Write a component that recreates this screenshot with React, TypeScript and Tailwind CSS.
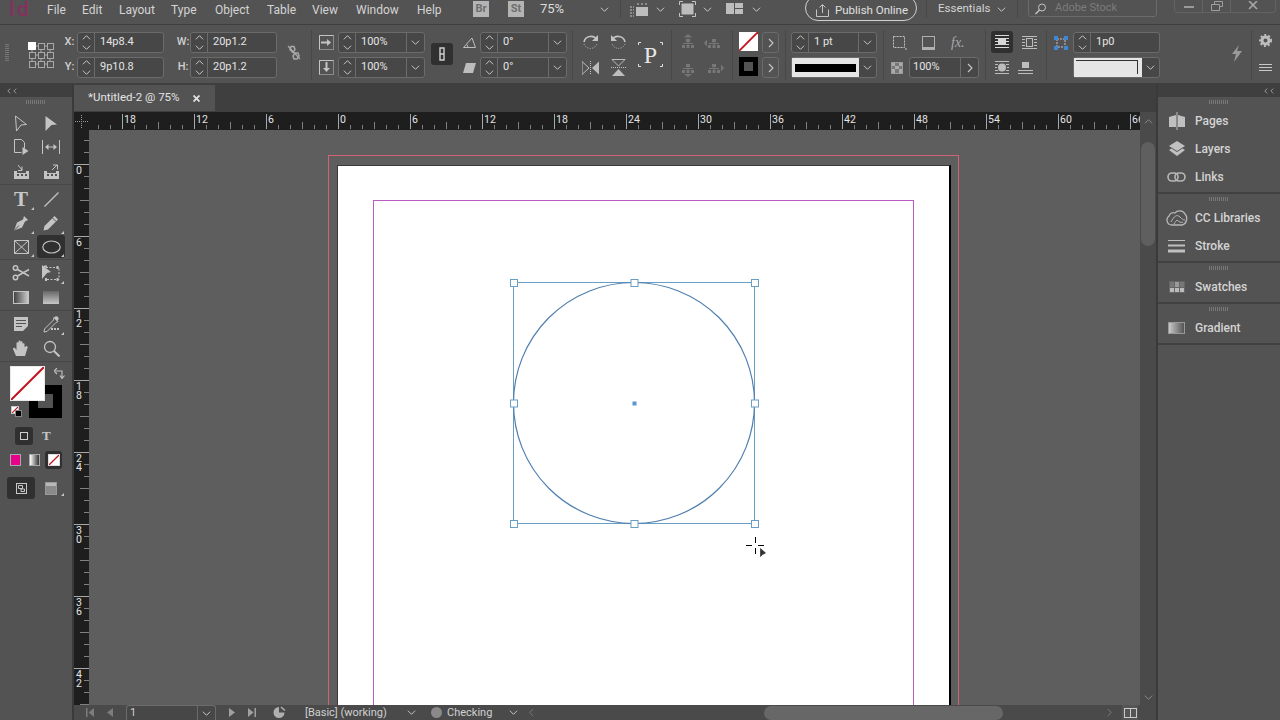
import type { ReactNode } from "react";

const ICON = "#c4c4c4";

function Chev({ dir = "down", size = 9, color = "#c8c8c8" }: { dir?: "down" | "up" | "left" | "right"; size?: number; color?: string }) {
	const d = { down: "M1 3l4 4 4-4", up: "M1 7l4-4 4 4", left: "M7 1L3 5l4 4", right: "M3 1l4 4-4 4" }[dir];
	return (
		<svg width={size} height={size} viewBox="0 0 10 10" fill="none" stroke={color} strokeWidth="1.1" className="shrink-0">
			<path d={d} />
		</svg>
	);
}

function Spin() {
	return (
		<div className="flex h-full w-[17px] shrink-0 flex-col items-center justify-center gap-[1px] border-r border-[#6b6b6b]">
			<Chev dir="up" />
			<Chev dir="down" />
		</div>
	);
}

function Field({ value, className, drop, next }: { value: string; className: string; drop?: boolean; next?: boolean }) {
	return (
		<div className={`flex h-[21px] items-center rounded-[3px] border border-[#6b6b6b] bg-[#474747] text-[11px] text-[#e4e4e4] ${className}`}>
			{next ? null : <Spin />}
			<span className={`flex-1 ${next ? "pl-[3px]" : "pl-[5px]"}`}>{value}</span>
			{drop ? (
				<div className="flex h-full w-[18px] items-center justify-center border-l border-[#6b6b6b]">
					<Chev />
				</div>
			) : null}
			{next ? (
				<div className="flex h-full w-[18px] items-center justify-center border-l border-[#6b6b6b]">
					<Chev dir="right" size={10} />
				</div>
			) : null}
		</div>
	);
}

function Divider({ className }: { className: string }) {
	return <div className={`mt-[-2px] h-[50px] w-px shrink-0 bg-[#484848] ${className}`} />;
}

function Col({ className, children }: { className: string; children: ReactNode }) {
	return <div className={`flex shrink-0 flex-col gap-[4px] ${className}`}>{children}</div>;
}

function Cell({ children, className = "" }: { children?: ReactNode; className?: string }) {
	return <div className={`flex h-[21px] items-center justify-center ${className}`}>{children}</div>;
}

function Svg({ w = 18, h = 18, children, vb }: { w?: number; h?: number; children: ReactNode; vb?: string }) {
	return (
		<svg width={w} height={h} viewBox={vb ?? `0 0 ${w} ${h}`} fill="none" stroke={ICON} className="shrink-0">
			{children}
		</svg>
	);
}

function NoneSwatch({ size, stroke = 2 }: { size: number; stroke?: number }) {
	return (
		<svg width={size} height={size} viewBox="0 0 20 20" className="block shrink-0">
			<rect width="20" height="20" fill="#fff" />
			<path d="M0 20L20 0" stroke="#c0151f" strokeWidth={stroke} />
		</svg>
	);
}

function Grip({ className = "" }: { className?: string }) {
	return <div className={`h-[4px] w-[20px] bg-[repeating-linear-gradient(90deg,#777_0,#777_1px,transparent_1px,transparent_2px)] ${className}`} />;
}

function OrgIcon({ arrow }: { arrow: "up" | "down" | "left" | "right" }) {
	return (
		<Svg w={20} h={20}>
			<g fill="#777" stroke="none">
				<rect x="8" y="6" width="4" height="3" />
				<rect x="4" y="12" width="3" height="3" />
				<rect x="8.5" y="12" width="3" height="3" />
				<rect x="13" y="12" width="3" height="3" />
				<rect x="5" y="10" width="10" height="1" />
				<rect x="9.5" y="9" width="1" height="3" />
				{arrow === "up" ? <path d="M10 1l4 3.5H6z" /> : null}
				{arrow === "down" ? <path d="M10 19l4-3H6z" /> : null}
				{arrow === "left" ? <path d="M0 10l3-3.5v7z" /> : null}
				{arrow === "right" ? <path d="M20 10l-3-3.5v7z" /> : null}
			</g>
		</Svg>
	);
}

function TitleBar() {
	return (
		<div className="flex h-[24px] shrink-0 items-start bg-[#535353] text-[12px] text-[#d4d4d4]">
			<span className="ml-[9px] -mt-[3px] w-[20px] text-[21px] font-medium leading-[24px] tracking-[2px] text-[#85305f]">Id</span>
			<div className="ml-[18px] mt-[1px] flex leading-[18px]">
				<span className="w-[35px]">File</span>
				<span className="w-[37px]">Edit</span>
				<span className="w-[52px]">Layout</span>
				<span className="w-[44px]">Type</span>
				<span className="w-[52px]">Object</span>
				<span className="w-[45px]">Table</span>
				<span className="w-[44px]">View</span>
				<span className="w-[61px]">Window</span>
				<span className="w-[56px]">Help</span>
			</div>
			<div className="mt-[1px] h-[16px] w-[16px] bg-[#b4b4b4] text-center text-[11px] font-bold leading-[16px] text-[#6e6e6e]">Br</div>
			<div className="ml-[19px] mt-[1px] h-[16px] w-[16px] bg-[#b4b4b4] text-center text-[11px] font-bold leading-[16px] text-[#6e6e6e]">St</div>
			<span className="ml-[16px] w-[60px] text-[13px] leading-[18px] text-[#dcdcdc]">75%</span>
			<div className="mt-[5px]"><Chev /></div>
			<div className="ml-[11px] h-[18px] w-px bg-[#484848]" />
			<div className="ml-[9px] mt-[1px]">
				<Svg w={19} h={16}>
					<rect x="6" y="6" width="12" height="9" fill="#bdbdbd" stroke="none" />
					<path d="M0 6h4M0 9h4M0 12h4M0 15h4M8 2v3M12 2v3M16 2v3" strokeDasharray="2 1" />
				</Svg>
			</div>
			<div className="ml-[7px] mt-[5px]"><Chev /></div>
			<div className="ml-[14px] mt-[1px]">
				<Svg w={17} h={16}>
					<rect x="2.5" y="2.5" width="12" height="11" fill="#bdbdbd" stroke="none" />
					<path d="M.5 4V.5H4M13 .5h3.500V4M.5 12v3.500H4M13 15.500h3.500V12" />
				</Svg>
			</div>
			<div className="ml-[7px] mt-[5px]"><Chev /></div>
			<div className="ml-[14px] mt-[3px]">
				<Svg w={17} h={11}>
					<g fill="#bdbdbd" stroke="none">
						<rect x="0" y="0" width="8" height="11" />
						<rect x="9" y="0" width="8" height="5" />
						<rect x="9" y="6" width="8" height="5" />
					</g>
				</Svg>
			</div>
			<div className="ml-[9px] mt-[5px]"><Chev /></div>
			<div className="ml-[44px] -mt-[5px] flex h-[26px] w-[112px] items-center gap-[6px] rounded-[13px] border border-[#d0d0d0] pl-[10px] pt-[5px] text-[11.5px] text-[#e0e0e0]">
				<Svg w={13} h={13}>
					<path d="M.5 5.5v7h12v-7M6.5 9V1M3.5 3.5l3-3 3 3" />
				</Svg>
				<span>Publish Online</span>
			</div>
			<div className="ml-[9px] h-[18px] w-px bg-[#484848]" />
			<span className="ml-[11px] w-[59px] text-[11.5px] leading-[16px] text-[#d4d4d4]">Essentials</span>
			<div className="mt-[5px]"><Chev /></div>
			<div className="ml-[11px] h-[18px] w-px bg-[#484848]" />
			<div className="ml-[10px] -mt-[3px] flex h-[20px] w-[129px] items-center gap-[6px] rounded-b-[3px] border border-[#6b6b6b] pl-[5px] pt-[3px] text-[11px] text-[#7c7c7c]">
				<Svg w={15} h={12}>
					<circle cx="8" cy="4.5" r="3.5" />
					<path d="M5.5 7L1.5 11" strokeWidth="1.5" />
				</Svg>
				<span>Adobe Stock</span>
			</div>
			<div className="ml-[17px] -mt-[2px] flex h-[15px] w-[102px] rounded-b-[3px] border border-[#636363]">
				<div className="flex w-[28px] items-center justify-center border-r border-[#636363]">
					<div className="mt-[3px] h-[2px] w-[10px] bg-[#9a9a9a]" />
				</div>
				<div className="flex w-[28px] items-center justify-center border-r border-[#636363]">
					<Svg w={12} h={10}>
						<path d="M3.5 3V.5h8v5H8.5M.5 3.5h8v6h-8z" stroke="#a0a0a0" />
					</Svg>
				</div>
				<div className="flex flex-1 items-center justify-center">
					<Svg w={10} h={9}>
						<path d="M1 0l8 8M9 0L1 8" stroke="#a8a8a8" strokeWidth="1.6" />
					</Svg>
				</div>
			</div>
		</div>
	);
}

function ControlBar() {
	return (
		<div className="flex h-[60px] shrink-0 border-y border-[#3f3f3f] bg-[#535353] pt-[7px] text-[11px] text-[#d0d0d0]">
			<div className="ml-[5px] mt-[12px] h-[17px] w-[4px] shrink-0 bg-[repeating-linear-gradient(0deg,#777_0,#777_1px,transparent_1px,transparent_2px)]" />
			{/* reference point */}
			<div className="ml-[19px] mt-[10px] w-[25px] shrink-0">
				<Svg w={26} h={26}>
					<g stroke="#a8a8a8">
						{[1, 10, 19].map((y) => [1, 10, 19].map((x) => <rect key={`${x}-${y}`} x={x + 0.5} y={y + 0.5} width="6" height="6" />))}
						<path d="M7 4h3M17 4h2M7 13h3M17 13h2M7 22h3M17 22h2M4 7v3M13 7v3M22 7v3M4 17v2M13 17v2M22 17v2" />
					</g>
					<rect x="0" y="0" width="8" height="8" fill="#fff" stroke="none" />
				</Svg>
			</div>
			<Col className="ml-[9px] w-[15px] font-medium">
				<Cell>X:</Cell>
				<Cell>Y:</Cell>
			</Col>
			<Col className="w-[88px]">
				<Field value="14p8.4" className="w-[87px]" />
				<Field value="9p10.8" className="w-[87px]" />
			</Col>
			<Col className="ml-[11px] w-[14px] font-medium">
				<Cell>W:</Cell>
				<Cell>H:</Cell>
			</Col>
			<Col className="w-[87px]">
				<Field value="20p1.2" className="w-[87px]" />
				<Field value="20p1.2" className="w-[87px]" />
			</Col>
			<div className="ml-[10px] mt-[13px] w-[14px] shrink-0">
				<Svg w={14} h={15}>
					<path d="M4 1.5h3l1 3-2 3-3-3zM8 8h3l1 3-2 3H7l-1-3z" strokeWidth="1.5" stroke="#a8a8a8" />
					<path d="M1 1l12 13" stroke="#a8a8a8" strokeWidth="1.2" />
				</Svg>
			</div>
			<Divider className="ml-[10px]" />
			<Col className="ml-[6px] w-[17px]">
				<Cell>
					<Svg w={15} h={15}>
						<rect x=".5" y=".5" width="14" height="14" strokeDasharray="1 1" />
						<path d="M.5.5h14M.5.5v14" />
						<path d="M2 7.5h7" strokeWidth="2" />
						<path d="M8 4l4 3.5L8 11z" fill={ICON} stroke="none" />
					</Svg>
				</Cell>
				<Cell>
					<Svg w={15} h={15}>
						<rect x=".5" y=".5" width="14" height="14" strokeDasharray="1 1" />
						<path d="M.5.5h14M.5.5v14" />
						<path d="M7.5 2v7" strokeWidth="2" />
						<path d="M4 8l3.5 4L11 8z" fill={ICON} stroke="none" />
					</Svg>
				</Cell>
			</Col>
			<Col className="ml-[3px] w-[87px]">
				<Field value="100%" className="w-[87px]" drop />
				<Field value="100%" className="w-[87px]" drop />
			</Col>
			<div className="ml-[6px] mt-[11px] flex h-[22px] w-[22px] shrink-0 items-center justify-center rounded-[3px] bg-[#303030]">
				<Svg w={8} h={14}>
					<path d="M2 1h4v6H2zM2 7h4v6H2z" strokeWidth="1.4" stroke="#d0d0d0" />
				</Svg>
			</div>
			<Col className="ml-[9px] w-[14px]">
				<Cell>
					<Svg w={13} h={11}>
						<path d="M.5 10.5h12L9 1z" stroke="#bdbdbd" />
						<path d="M5 10.5l-1-3" stroke="#bdbdbd" />
					</Svg>
				</Cell>
				<Cell>
					<Svg w={13} h={10}>
						<path d="M3 0h10l-3 10H0z" fill="#bdbdbd" stroke="none" />
					</Svg>
				</Cell>
			</Col>
			<Col className="ml-[4px] w-[87px]">
				<Field value="0°" className="w-[87px]" drop />
				<Field value="0°" className="w-[87px]" drop />
			</Col>
			<Divider className="ml-[5px]" />
			<Col className="ml-[8px] w-[18px]">
				<Cell>
					<Svg w={17} h={17}>
						<path d="M15 6A7 7 0 0 0 2 8" strokeWidth="1.6" />
						<path d="M2 10a7 7 0 0 0 13 0" strokeDasharray="1 1.5" />
						<path d="M16 1v6h-6z" fill={ICON} stroke="none" />
					</Svg>
				</Cell>
				<Cell>
					<Svg w={17} h={14}>
						<path d="M0 .5l7 6.5L0 13.5z" stroke="#bdbdbd" />
						<path d="M8.5 0v14" strokeDasharray="1 1" />
						<path d="M17 .5L10 7l7 6.5z" fill="#bdbdbd" stroke="none" />
					</Svg>
				</Cell>
			</Col>
			<Col className="ml-[10px] w-[18px]">
				<Cell>
					<Svg w={17} h={17}>
						<path d="M2 6a7 7 0 0 1 13 2" strokeWidth="1.6" />
						<path d="M15 10a7 7 0 0 1-13 0" strokeDasharray="1 1.5" />
						<path d="M1 1v6h6z" fill={ICON} stroke="none" />
					</Svg>
				</Cell>
				<Cell>
					<Svg w={15} h={17}>
						<path d="M1 .5h13L7.5 7z" stroke="#bdbdbd" />
						<path d="M0 8.5h15" strokeDasharray="1 1" />
						<path d="M1 17h13l-6.5-7z" fill="#bdbdbd" stroke="none" />
					</Svg>
				</Cell>
			</Col>
			<div className="relative ml-[11px] mt-[10px] flex h-[25px] w-[25px] shrink-0 items-center justify-center font-['Liberation_Serif',serif] text-[24px] leading-none text-[#e6e6e6]">
				P
				<svg width="25" height="25" viewBox="0 0 25 25" fill="none" stroke="#e0e0e0" className="absolute left-0 top-0">
					<path d="M.5 3V.5H3M22 .5h2.500V3M.5 22v2.500H3M22 24.500h2.500V22" />
				</svg>
			</div>
			<Divider className="ml-[8px]" />
			<Col className="ml-[6px] w-[20px]">
				<Cell><OrgIcon arrow="up" /></Cell>
				<Cell><OrgIcon arrow="down" /></Cell>
			</Col>
			<Col className="ml-[6px] w-[20px]">
				<Cell><OrgIcon arrow="left" /></Cell>
				<Cell><OrgIcon arrow="right" /></Cell>
			</Col>
			<Divider className="ml-[8px]" />
			<Col className="ml-[6px] w-[19px]">
				<NoneSwatch size={19} />
				<div className="mt-[2px] flex h-[19px] w-[19px] items-center justify-center bg-black">
					<div className="h-[9px] w-[9px] bg-[#535353]" />
				</div>
			</Col>
			<Col className="ml-[4px] w-[17px]">
				<div className="flex h-[21px] items-center justify-center rounded-[3px] border border-[#6b6b6b]"><Chev dir="right" size={10} /></div>
				<div className="flex h-[21px] items-center justify-center rounded-[3px] border border-[#6b6b6b]"><Chev dir="right" size={10} /></div>
			</Col>
			<Divider className="ml-[6px]" />
			<Col className="ml-[5px] w-[86px]">
				<Field value="1 pt" className="w-[86px]" drop />
				<div className="flex h-[21px] w-[86px] rounded-[3px] border border-[#6b6b6b] bg-[#474747]">
					<div className="flex w-[67px] items-center justify-center bg-[#e6e6e6]">
						<div className="h-[8px] w-[61px] bg-black" />
					</div>
					<div className="flex flex-1 items-center justify-center"><Chev /></div>
				</div>
			</Col>
			<Divider className="ml-[6px]" />
			<Col className="ml-[7px] w-[88px]">
				<div className="flex h-[21px] items-center pl-[2px]">
					<Svg w={14} h={14}>
						<rect x=".5" y=".5" width="11" height="11" strokeDasharray="2 1" />
						<path d="M12 13h2" />
					</Svg>
					<div className="ml-[15px] h-[14px] w-[13px] border border-b-[3px] border-[#b0b0b0]" />
					<span className="ml-[16px] font-['Liberation_Serif',serif] text-[14px] italic text-[#a8a8a8]">fx.</span>
				</div>
				<div className="flex h-[21px] items-center">
					<div className="grid h-[12px] w-[12px] grid-cols-3 border border-[#9a9a9a] bg-[#777]">
						<div className="bg-[#aaa]" /><div /><div className="bg-[#aaa]" />
						<div /><div className="bg-[#aaa]" /><div />
						<div className="bg-[#aaa]" /><div /><div className="bg-[#aaa]" />
					</div>
					<Field value="100%" className="ml-[6px] w-[70px]" next />
				</div>
			</Col>
			<Divider className="ml-[6px]" />
			<Col className="ml-[5px] w-[46px]">
				<div className="flex h-[21px] items-center">
					<div className="-mt-[2px] flex h-[22px] w-[22px] items-center justify-center rounded-[3px] bg-[#303030]">
						<Svg w={14} h={13}>
							<path d="M0 .5h14M0 3.500h14M0 6.500h14M0 9.500h14M0 12.500h14" stroke="#d8d8d8" />
							<rect x="3" y="3" width="8" height="7" fill="#d8d8d8" stroke="none" />
						</Svg>
					</div>
					<div className="ml-[9px]">
						<Svg w={15} h={13}>
							<path d="M0 .5h15M0 12.500h15M0 3.500h3M0 6.500h3M0 9.500h3M12 3.500h3M12 6.500h3M12 9.500h3" stroke="#bdbdbd" />
							<rect x="4.5" y="2.5" width="6" height="8" stroke="#bdbdbd" />
						</Svg>
					</div>
				</div>
				<div className="flex h-[21px] items-center pl-[4px]">
					<Svg w={14} h={13}>
						<path d="M0 .5h14M0 12.500h14M0 3.500h3M0 6.500h2M0 9.500h3M11 3.500h3M12 6.500h2M11 9.500h3" stroke="#bdbdbd" />
						<circle cx="7" cy="6.500" r="4" fill="#bdbdbd" stroke="none" />
					</Svg>
					<div className="ml-[9px]">
						<Svg w={15} h={13}>
							<path d="M0 12.500h15M0 9.500h15" stroke="#bdbdbd" />
							<rect x="4" y="1" width="7" height="6" fill="#bdbdbd" stroke="none" />
						</Svg>
					</div>
				</div>
			</Col>
			<Divider className="ml-[9px]" />
			<Col className="ml-[7px] w-[106px]">
				<div className="flex h-[21px] items-center">
					<Svg w={14} h={14}>
						<path d="M3 3h8v8H3z" strokeDasharray="2 1" />
						<g fill="#3f86d6" stroke="none">
							<rect x="0" y="0" width="4" height="4" />
							<rect x="10" y="0" width="4" height="4" />
							<rect x="0" y="10" width="4" height="4" />
							<rect x="10" y="10" width="4" height="4" />
						</g>
					</Svg>
					<Field value="1p0" className="ml-[5px] w-[87px]" />
				</div>
				<div className="ml-[19px] flex h-[21px] w-[87px] rounded-[3px] border border-[#6b6b6b] bg-[#474747]">
					<div className="w-[68px] bg-[#e6e6e6] pl-[2px] pr-[4px] pt-[2px]">
						<div className="h-[14px] border-r border-t border-[#333]" />
					</div>
					<div className="flex flex-1 items-center justify-center"><Chev /></div>
				</div>
			</Col>
			<div className="ml-[71px] mt-[13px] w-[11px] shrink-0">
				<Svg w={11} h={17}>
					<path d="M8 0L1 9h4l-2 8 8-11H6z" fill="#9a9a9a" stroke="none" />
				</Svg>
			</div>
			<Divider className="ml-[9px]" />
			<Col className="ml-[6px] w-[14px]">
				<Cell className="pb-[4px]">
					<Svg w={13} h={13}>
						<circle cx="6.5" cy="6.5" r="3.500" strokeWidth="3" stroke="#bdbdbd" />
						<circle cx="6.5" cy="6.5" r="5.500" strokeDasharray="2 2" strokeWidth="2" stroke="#bdbdbd" />
					</Svg>
				</Cell>
				<Cell>
					<Svg w={13} h={7}>
						<path d="M0 .5h13M0 3.500h13M0 6.500h13" stroke="#c8c8c8" />
					</Svg>
				</Cell>
			</Col>
		</div>
	);
}

function Tool({ children, corner, active }: { children: ReactNode; corner?: boolean; active?: boolean }) {
	return (
		<div className={`relative flex h-full w-[28px] items-center justify-center rounded-[3px] ${active ? "bg-[#303030]" : ""}`}>
			{children}
			{corner ? <span className="absolute bottom-[1px] right-[1px] h-0 w-0 border-b-[3px] border-l-[3px] border-b-[#c8c8c8] border-l-transparent" /> : null}
		</div>
	);
}

function ToolRow({ children, className }: { children: ReactNode; className: string }) {
	return <div className={`flex justify-between px-[7px] ${className}`}>{children}</div>;
}

function ToolPanel() {
	return (
		<div className="flex w-[74px] shrink-0 flex-col border-r-2 border-[#3a3a3a] bg-[#535353]">
			<div className="flex h-[13px] shrink-0 items-center bg-[#3f3f3f] pl-[6px]">
				<Chev dir="left" size={6} /><Chev dir="left" size={6} />
			</div>
			<Grip className="ml-[26px] mt-[3px] shrink-0" />
			<ToolRow className="mt-[7px] h-[24px]">
				<Tool>
					<Svg w={14} h={17}><path d="M1.5 1l11 8.500-5.500.5-4.500 6z" /></Svg>
				</Tool>
				<Tool>
					<Svg w={14} h={17}><path d="M1.500 1l11.500 8.500-5.500.5-6 6z" fill={ICON} stroke="none" /></Svg>
				</Tool>
			</ToolRow>
			<ToolRow className="h-[23px]">
				<Tool>
					<Svg w={16} h={16}>
						<path d="M1.500.5h7l3 3v6M1.500.5v13h7" />
						<path d="M9.500 8l6 4-6 4z" fill={ICON} stroke="none" />
					</Svg>
				</Tool>
				<Tool>
					<Svg w={18} h={14}>
						<path d="M.5 0v14M17.500 0v14M4 7h10" />
						<path d="M3 7l3.500-3v6zM15 7l-3.500-3v6z" fill={ICON} stroke="none" />
					</Svg>
				</Tool>
			</ToolRow>
			<ToolRow className="h-[26px]">
				<Tool>
					<Svg w={15} h={15}>
						<path d="M0 7h3v2h9V7h3v8H0z" fill={ICON} stroke="none" />
						<path d="M4 1l4 5M8 2.500v4H4" />
						<path d="M3 11h2M7 11h2M11 11h2" stroke="#535353" strokeWidth="2" />
					</Svg>
				</Tool>
				<Tool>
					<Svg w={15} h={15}>
						<path d="M0 7h3v2h9V7h3v8H0z" fill={ICON} stroke="none" />
						<path d="M8 6l5-5M9 1h4.500v4.500" />
						<path d="M3 11h2M7 11h2M11 11h2" stroke="#535353" strokeWidth="2" />
					</Svg>
				</Tool>
			</ToolRow>
			<div className="h-px shrink-0 bg-[#484848]" />
			<ToolRow className="mt-[2px] h-[24px]">
				<Tool corner>
					<span className="font-['Liberation_Serif',serif] text-[21px] font-bold leading-none text-[#c8c8c8]">T</span>
				</Tool>
				<Tool>
					<Svg w={15} h={15}><path d="M.5 14.500l14-14" strokeWidth="1.300" /></Svg>
				</Tool>
			</ToolRow>
			<ToolRow className="h-[24px]">
				<Tool corner>
					<Svg w={16} h={16}>
						<path d="M11 1l4 4-3 1.500-3 6L1 15.500l3-8 6-3z" fill={ICON} stroke="none" />
						<path d="M1 15.500l5-5" stroke="#535353" />
					</Svg>
				</Tool>
				<Tool corner>
					<Svg w={16} h={16}>
						<path d="M11.500 1L15 4.500 5 14.500l-4.500 1 1-4.500z" fill={ICON} stroke="none" />
						<path d="M9.500 3L13 6.500" stroke="#535353" />
					</Svg>
				</Tool>
			</ToolRow>
			<ToolRow className="h-[23px]">
				<Tool corner>
					<Svg w={15} h={14}><path d="M.5.5h14v13H.5zM.5.5l14 13M14.500.5l-14 13" /></Svg>
				</Tool>
				<Tool corner active>
					<Svg w={19} h={14}><ellipse cx="9.5" cy="7" rx="8.700" ry="6" strokeWidth="1.200" /></Svg>
				</Tool>
			</ToolRow>
			<div className="mt-[1px] h-px shrink-0 bg-[#484848]" />
			<ToolRow className="mt-[1px] h-[24px]">
				<Tool>
					<Svg w={18} h={16}>
						<circle cx="3.500" cy="3" r="2.200" strokeWidth="1.500" />
						<circle cx="3.500" cy="12.500" r="2.200" strokeWidth="1.500" />
						<path d="M5.500 4.500L17 11M5.500 11L17 4.500" strokeWidth="1.500" />
					</Svg>
				</Tool>
				<Tool corner>
					<Svg w={20} h={18}>
						<path d="M5 3.500h13v12H6" strokeDasharray="2 1.500" />
						<path d="M1 1l9 7-4 1-5 6z" fill={ICON} stroke="none" />
						<path d="M3 2.500h3M16.500 2v3M16.500 14v3M5 14v3" strokeWidth="2" />
					</Svg>
				</Tool>
			</ToolRow>
			<ToolRow className="h-[24px]">
				<Tool>
					<div className="h-[13px] w-[16px] border border-[#c4c4c4] bg-[linear-gradient(90deg,#444,#c8c8c8)]" />
				</Tool>
				<Tool>
					<div className="h-[13px] w-[16px] bg-[linear-gradient(180deg,#666,#c8c8c8)]" />
				</Tool>
			</ToolRow>
			<div className="mt-[1px] h-px shrink-0 bg-[#484848]" />
			<ToolRow className="mt-[1px] h-[24px]">
				<Tool>
					<Svg w={14} h={14}>
						<path d="M0 0h14v9l-5 5H0z" fill={ICON} stroke="none" />
						<path d="M2 3.500h10M2 6.500h10M2 9.500h6" stroke="#535353" />
					</Svg>
				</Tool>
				<Tool corner>
					<Svg w={17} h={17}>
						<path d="M11 1.500l4 4-2 1-9 9-3 .5.500-3 9-9z" />
						<path d="M11 2c1-2 3-2 4-1s1 3-1 4z" fill={ICON} stroke="none" />
						<path d="M8 13h8" strokeWidth="2" strokeDasharray="2 1" />
					</Svg>
				</Tool>
			</ToolRow>
			<ToolRow className="h-[24px]">
				<Tool>
					<Svg w={16} h={17}>
						<path d="M3 16L0 9c0-1 1-1.500 2-1l1.500 2V3c0-1 2-1 2 0V1.500c0-1.500 2-1.500 2 0V2c0-1 2-1 2 0v2c0-1 2-1 2 0v3l2-1c1 0 1.500 1 1 2L12 16z" fill={ICON} stroke="none" />
					</Svg>
				</Tool>
				<Tool>
					<Svg w={17} h={17}>
						<circle cx="7" cy="7" r="5.500" strokeWidth="1.300" />
						<path d="M11 11l5.500 5.500" strokeWidth="2" />
					</Svg>
				</Tool>
			</ToolRow>
			<div className="mt-[1px] h-px shrink-0 bg-[#484848]" />
			{/* fill and stroke */}
			<div className="relative h-[64px] shrink-0">
				<div className="absolute left-[29px] top-[23px] h-[33px] w-[33px] bg-black">
					<div className="ml-[9px] mt-[9px] h-[14px] w-[15px] bg-[#535353]" />
				</div>
				<div className="absolute left-[10px] top-[4px] border border-[#e8e8e8]">
					<NoneSwatch size={33} stroke={1.2} />
				</div>
				<div className="absolute left-[54px] top-[6px]">
					<Svg w={11} h={11}>
						<path d="M1.500 3h6.500v7M0 3l3-3M0 3l3 3M6 7.500l2 3 2.500-3" strokeWidth="1.100" />
					</Svg>
				</div>
				<div className="absolute left-[11px] top-[44px] border border-[#c8c8c8]">
					<NoneSwatch size={6} stroke={4} />
				</div>
				<div className="absolute left-[15px] top-[48px] h-[7px] w-[7px] border border-[#888] bg-black" />
			</div>
			<div className="mt-[1px] flex h-[18px] shrink-0 items-center px-[15px]">
				<div className="flex h-[18px] w-[18px] items-center justify-center rounded-[3px] bg-[#303030]">
					<div className="h-[8px] w-[8px] border border-[#d0d0d0]" />
				</div>
				<span className="ml-[9px] font-['Liberation_Serif',serif] text-[13px] font-bold text-[#c8c8c8]">T</span>
			</div>
			<div className="mt-[5px] flex h-[20px] shrink-0 items-center px-[10px]">
				<div className="h-[12px] w-[12px] border border-[#a8a8a8] bg-[#e6008c]" />
				<div className="ml-[8px] h-[12px] w-[12px] border border-[#a8a8a8] bg-[linear-gradient(90deg,#fff,#333)]" />
				<div className="ml-[5px] flex h-[18px] w-[18px] items-center justify-center rounded-[3px] bg-[#303030]">
					<div className="border border-[#ddd]"><NoneSwatch size={10} stroke={2.5} /></div>
				</div>
			</div>
			<div className="mt-[7px] flex h-[22px] shrink-0 items-center pl-[7px]">
				<div className="flex h-[22px] w-[28px] items-center justify-center rounded-[3px] bg-[#303030]">
					<Svg w={11} h={11}>
						<rect x=".5" y=".5" width="10" height="10" stroke="#c8c8c8" />
						<path d="M2.500 2.500h4v3h-4zM5 6h3.500v2.500H5z" stroke="#c8c8c8" />
					</Svg>
				</div>
				<div className="ml-[10px] h-[13px] w-[12px] border border-[#999] bg-[#8a8a8a]">
					<div className="h-[3px] bg-[#b8b8b8]" />
				</div>
				<span className="ml-[4px] mt-[12px] h-0 w-0 border-b-[3px] border-l-[3px] border-b-[#c8c8c8] border-l-transparent" />
			</div>
		</div>
	);
}

const H_LABELS = [
	{ t: "18", x: 50 }, { t: "12", x: 122 }, { t: "6", x: 194 }, { t: "0", x: 266 }, { t: "6", x: 338 }, { t: "12", x: 410 },
	{ t: "18", x: 482 }, { t: "24", x: 554 }, { t: "30", x: 626 }, { t: "36", x: 698 }, { t: "42", x: 770 }, { t: "48", x: 842 },
	{ t: "54", x: 914 }, { t: "60", x: 986 }, { t: "66", x: 1058 },
];

function HRuler() {
	return (
		<svg width="1066" height="18" viewBox="0 0 1066 18" className="block shrink-0">
			<rect width="1066" height="18" fill="#1e1e1e" />
			<g fill="none" strokeWidth="1">
				{Array.from({ length: 89 }, (_, i) => 12 * i + 0.5).map((x) => {
					const major = (x - 48.5) % 72 === 0;
					const mid = (x - 12.5) % 72 === 0;
					return <path key={x} d={`M${x} ${major ? 2 : mid ? 10 : 13}V17`} stroke={major ? "#a8a8a8" : "#808080"} />;
				})}
			</g>
			{H_LABELS.map((l) => (
				<text key={l.x} x={l.x} y="11" fill="#e4e4e4" fontSize="10.5" fontFamily="Roboto, sans-serif">{l.t}</text>
			))}
			<rect x="0" y="0" width="15" height="18" fill="#1e1e1e" />
			<path d="M1 9.500h13M7.500 3v13" stroke="#999" strokeDasharray="1 1" fill="none" />
		</svg>
	);
}

const V_LABELS = [
	{ t: ["0"], y: 34 }, { t: ["6"], y: 106 }, { t: ["1", "2"], y: 178 }, { t: ["1", "8"], y: 250 },
	{ t: ["2", "4"], y: 322 }, { t: ["3", "0"], y: 394 }, { t: ["3", "6"], y: 466 }, { t: ["4", "2"], y: 538 },
];

function VRuler() {
	return (
		<svg width="15" height="575" viewBox="0 0 15 575" className="block shrink-0">
			<rect width="15" height="575" fill="#1e1e1e" />
			{Array.from({ length: 48 }, (_, i) => 10.5 + 12 * i).map((y) => {
				const major = (y - 34.5 + 72) % 72 === 0;
				const mid = (y - 70.5 + 72) % 72 === 0;
				return <path key={y} d={`M${major ? 0 : mid ? 6 : 10} ${y}H15`} stroke={major ? "#a8a8a8" : "#808080"} />;
			})}
			{V_LABELS.map((l) =>
				l.t.map((c, i) => (
					<text key={`${l.y}-${i}`} x="2" y={l.y + 9.5 + i * 9.5} fill="#e4e4e4" fontSize="10.5" fontFamily="Roboto, sans-serif">{c}</text>
				)),
			)}
		</svg>
	);
}

function Selection() {
	const handles = [[424.5, 152.5], [545, 152.5], [665.5, 152.5], [424.5, 273], [665.5, 273], [424.5, 393.5], [545, 393.5], [665.5, 393.5]];
	return (
		<svg width="800" height="450" viewBox="0 0 800 450" fill="none" className="absolute left-0 top-0">
			<rect x="424.5" y="152.5" width="241" height="241" stroke="#6a9fc4" />
			<circle cx="545" cy="273" r="120.5" stroke="#4f7fb0" strokeWidth="1.2" />
			{handles.map(([x, y]) => (
				<rect key={`${x}-${y}`} x={x - 3} y={y - 3} width="7" height="7" fill="#fff" stroke="#6a9fc4" />
			))}
			<rect x="543.5" y="271.5" width="4" height="4" fill="#5b95d8" />
			{/* draw cursor */}
			<g stroke="#000">
				<path d="M657 415.500h6M669 415.500h6M666.500 407v6M666.500 418v6" />
				<path d="M671.500 418.500v8l2-2 3-1.500z" fill="#333" stroke="#222" strokeWidth=".6" />
			</g>
		</svg>
	);
}

function Canvas() {
	return (
		<div className="relative h-[575px] w-[1051px] overflow-hidden bg-[#5e5e5e]">
			<div className="ml-[239px] mt-[25px] h-[700px] w-[631px] border border-[#cf6476]">
				<div className="ml-[8px] mt-[9px] h-[700px] w-[614px] border-l border-r-2 border-t border-r-black border-l-[#3a3a3a] border-t-[#3a3a3a] bg-white">
					<div className="ml-[35px] mt-[34px] h-[700px] w-[541px] border border-[#b95cc2]" />
				</div>
			</div>
			<Selection />
		</div>
	);
}

function StatusBar() {
	return (
		<div className="flex h-[15px] shrink-0 items-center bg-[#4a4a4a] text-[11px] text-[#d0d0d0]">
			<div className="ml-[12px] w-[8px]">
				<Svg w={8} h={9}><path d="M0 0h1.500v9H0zM8 0v9L2.500 4.500z" fill="#7c7c7c" stroke="none" /></Svg>
			</div>
			<div className="ml-[13px] w-[6px]">
				<Svg w={6} h={9}><path d="M6 0v9L0 4.500z" fill="#7c7c7c" stroke="none" /></Svg>
			</div>
			<div className="ml-[13px] flex h-[15px] w-[90px] items-center rounded-t-[3px] border border-b-0 border-[#6b6b6b] bg-[#474747] pl-[3px]">
				<span className="flex-1">1</span>
				<div className="flex h-full w-[18px] items-center justify-center border-l border-[#6b6b6b]"><Chev /></div>
			</div>
			<div className="ml-[13px] w-[6px]">
				<Svg w={6} h={9}><path d="M0 0v9l6-4.500z" fill="#a0a0a0" stroke="none" /></Svg>
			</div>
			<div className="ml-[13px] w-[8px]">
				<Svg w={8} h={9}><path d="M0 0v9l5.500-4.500zM6.500 0H8v9H6.500z" fill="#a0a0a0" stroke="none" /></Svg>
			</div>
			<div className="ml-[17px] w-[14px]">
				<Svg w={14} h={13}>
					<path d="M6 1a5.500 5.500 0 1 0 5.500 5.500H6z" fill="#b0b0b0" stroke="none" />
					<path d="M8 1l4 3.500" stroke="#b0b0b0" strokeWidth="1.500" />
				</Svg>
			</div>
			<span className="ml-[18px] w-[102px] pt-px">[Basic] (working)</span>
			<Chev />
			<div className="ml-[15px] h-[11px] w-[11px] rounded-full bg-[#8a8a8a]" />
			<span className="ml-[5px] w-[62px] pt-px">Checking</span>
			<Chev />
			<div className="ml-[9px]"><Chev dir="left" color="#787878" /></div>
			<div className="ml-[228px] h-[14px] w-[239px] rounded-full bg-[#676767]" />
			<div className="ml-[102px]"><Chev dir="right" color="#787878" /></div>
			<div className="ml-[8px] flex h-[15px] w-[16px] items-center justify-center bg-[#555]">
				<div className="h-[10px] w-[13px] border border-[#c8c8c8] bg-[linear-gradient(90deg,transparent_45%,#c8c8c8_45%,#c8c8c8_55%,transparent_55%)]" />
			</div>
		</div>
	);
}

function Scrollbar() {
	return (
		<div className="flex w-[16px] shrink-0 flex-col items-center bg-[#4a4a4a]">
			<div className="mt-[5px]"><Chev dir="up" color="#8a8a8a" /></div>
			<div className="mt-[16px] h-[104px] w-[14px] rounded-full bg-[#5f5f5f]" />
			<div className="mb-[3px] mt-auto"><Chev color="#8a8a8a" /></div>
		</div>
	);
}

function PanelItem({ icon, label, className }: { icon: ReactNode; label: string; className: string }) {
	return (
		<div className={`flex items-center ${className}`}>
			<div className="flex w-[37px] justify-center">{icon}</div>
			<span className="text-[12px] font-medium text-[#d4d4d4]">{label}</span>
		</div>
	);
}

function PanelGroup({ children, className }: { children: ReactNode; className: string }) {
	return (
		<div className={`flex flex-col border-b-2 border-[#414141] ${className}`}>
			<Grip className="mx-auto mt-[3px] shrink-0" />
			{children}
		</div>
	);
}

function RightPanel() {
	return (
		<div className="flex w-[124px] shrink-0 flex-col border-l-2 border-[#3a3a3a] bg-[#535353]">
			<div className="flex h-[13px] shrink-0 items-center justify-end bg-[#3f3f3f] pr-[5px]">
				<Chev dir="left" size={6} /><Chev dir="left" size={6} />
			</div>
			<PanelGroup className="h-[97px]">
				<PanelItem
					className="mt-[3px] h-[28px]"
					label="Pages"
					icon={
						<Svg w={18} h={18}>
							<path d="M1 5l7-2v12H1zM10 3l7 2v10h-7z" fill="#c0c0c0" stroke="none" />
							<path d="M9 0v18" stroke="#c0c0c0" />
						</Svg>
					}
				/>
				<PanelItem
					className="h-[28px]"
					label="Layers"
					icon={
						<Svg w={18} h={17}>
							<path d="M9 0l8 5-8 5-8-5z" fill="#c0c0c0" stroke="none" />
							<path d="M1 9l2.500-1.500L9 11l5.500-3.500L17 9l-8 6z" fill="#c0c0c0" stroke="none" />
						</Svg>
					}
				/>
				<PanelItem
					className="h-[28px]"
					label="Links"
					icon={
						<Svg w={19} h={10}>
							<rect x="1" y="1" width="10" height="8" rx="4" strokeWidth="1.600" stroke="#b8b8b8" />
							<rect x="8" y="1" width="10" height="8" rx="4" strokeWidth="1.600" stroke="#b8b8b8" />
						</Svg>
					}
				/>
			</PanelGroup>
			<PanelGroup className="h-[69px]">
				<PanelItem
					className="mt-[3px] h-[28px]"
					label="CC Libraries"
					icon={
						<Svg w={22} h={16}>
							<path d="M6 15A5 5 0 0 1 3 6c1-3 4-4 6-3 2-3 8-3 10 1 3 3 2 10-3 11z" stroke="#b8b8b8" strokeWidth="1.300" />
							<path d="M5 12c3-6 6-8 9-5 2 2 3 3 5 3M17 12c-2 1-4 0-6-2-1 1-2 2-3 4" stroke="#b8b8b8" />
						</Svg>
					}
				/>
				<PanelItem
					className="h-[28px]"
					label="Stroke"
					icon={
						<Svg w={18} h={13}>
							<path d="M0 .5h17" stroke="#c0c0c0" />
							<path d="M0 5.500h17" stroke="#c0c0c0" strokeWidth="2" />
							<path d="M0 11h17" stroke="#c0c0c0" strokeWidth="3" />
						</Svg>
					}
				/>
			</PanelGroup>
			<PanelGroup className="h-[41px]">
				<PanelItem
					className="mt-[5px] h-[24px]"
					label="Swatches"
					icon={
						<div className="grid h-[12px] w-[16px] grid-cols-3 gap-px bg-[#666] p-px">
							<div className="bg-[#777]" /><div className="bg-[#9a9a9a]" /><div className="bg-[#777]" />
							<div className="bg-[#bbb]" /><div className="bg-[#bbb]" /><div className="bg-[#bbb]" />
						</div>
					}
				/>
			</PanelGroup>
			<PanelGroup className="h-[41px]">
				<PanelItem
					className="mt-[5px] h-[24px]"
					label="Gradient"
					icon={<div className="h-[12px] w-[17px] border border-[#999] bg-[linear-gradient(90deg,#c8c8c8,#555)]" />}
				/>
			</PanelGroup>
		</div>
	);
}

export default function App() {
	return (
		<div className="flex h-[720px] w-[1280px] flex-col overflow-hidden bg-[#535353] font-['Roboto',sans-serif]">
			<TitleBar />
			<ControlBar />
			<div className="flex min-h-0 flex-1">
				<ToolPanel />
				<div className="flex w-[1082px] shrink-0 flex-col bg-[#3f3f3f]">
					<div className="flex h-[28px] shrink-0 pt-[1px]">
						<div className="flex h-[26px] w-[141px] items-center bg-[#535353] pl-[14px] text-[11.5px] text-[#e4e4e4]">
							<span className="w-[105px]">*Untitled-2 @ 75%</span>
							<Svg w={7} h={7}><path d="M.5.5l6 6M6.500.5l-6 6" stroke="#e0e0e0" strokeWidth="1.800" /></Svg>
						</div>
					</div>
					<div className="flex min-h-0 flex-1">
						<div className="flex w-[1066px] flex-col">
							<HRuler />
							<div className="flex min-h-0 flex-1">
								<VRuler />
								<Canvas />
							</div>
						</div>
						<Scrollbar />
					</div>
					<StatusBar />
				</div>
				<RightPanel />
			</div>
		</div>
	);
}
